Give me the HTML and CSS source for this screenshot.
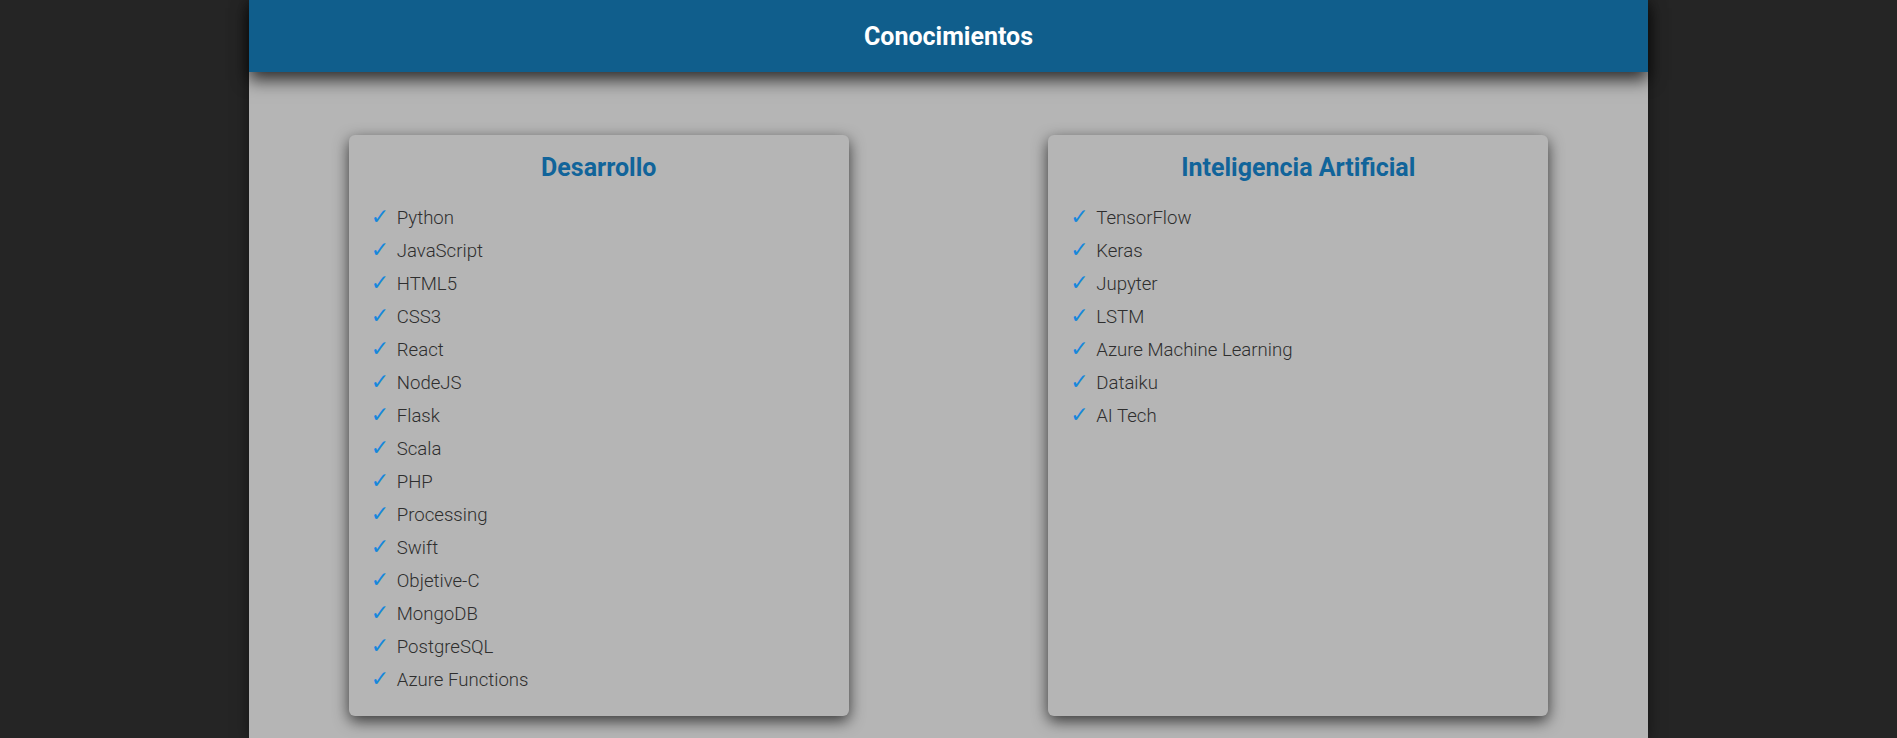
FILE: index.html
```html
<!DOCTYPE html>
<html lang="es">
<head>
<meta charset="utf-8">
<title>Conocimientos</title>
<link rel="stylesheet" href="styles.css">
</head>
<body>
<div class="page">
  <header class="topbar">
    <h1 class="topbar-title">Conocimientos</h1>
  </header>
  <main class="columns">
    <section class="col">
      <div class="card">
        <h2 class="card-title">Desarrollo</h2>
        <ul class="skills">
          <li>Python</li>
          <li>JavaScript</li>
          <li>HTML5</li>
          <li>CSS3</li>
          <li>React</li>
          <li>NodeJS</li>
          <li>Flask</li>
          <li>Scala</li>
          <li>PHP</li>
          <li>Processing</li>
          <li>Swift</li>
          <li>Objetive-C</li>
          <li>MongoDB</li>
          <li>PostgreSQL</li>
          <li>Azure Functions</li>
        </ul>
      </div>
    </section>
    <section class="col">
      <div class="card">
        <h2 class="card-title">Inteligencia Artificial</h2>
        <ul class="skills">
          <li>TensorFlow</li>
          <li>Keras</li>
          <li>Jupyter</li>
          <li>LSTM</li>
          <li>Azure Machine Learning</li>
          <li>Dataiku</li>
          <li>AI Tech</li>
        </ul>
      </div>
    </section>
  </main>
</div>
</body>
</html>
```
FILE: styles.css
```css
html, body {
  margin: 0;
  padding: 0;
  background: #252525;
  font-family: Roboto, "Liberation Sans", sans-serif;
}

.page {
  width: 1399px;
  margin: 0 auto;
  min-height: 100vh;
  background: #b5b5b5;
  box-shadow: 0 0 14px rgba(0, 0, 0, 0.5);
  position: relative;
}

.topbar {
  height: 72px;
  background: #105e8c;
  display: flex;
  align-items: center;
  justify-content: center;
  box-shadow: 0 8px 16px rgba(0, 0, 0, 0.75);
  position: relative;
  z-index: 1;
}

.topbar-title {
  margin: 0;
  color: #ffffff;
  font-size: 25px;
  font-weight: 700;
}

.columns {
  display: grid;
  grid-template-columns: 1fr 1fr;
  padding-top: 63px;
  padding-bottom: 22px;
}

.col {
  display: flex;
  justify-content: center;
}

.card {
  width: 500px;
  box-sizing: border-box;
  background: #b5b5b5;
  border-radius: 6px;
  box-shadow: 0 5px 15px rgba(0, 0, 0, 0.7);
  padding: 18px 22px 19px;
}

.card-title {
  margin: 0;
  text-align: center;
  color: #11649a;
  font-size: 25px;
  font-weight: 700;
  line-height: 30px;
}

.skills {
  list-style: none;
  margin: 19px 0 0;
  padding: 0;
}

.skills li {
  font-size: 18.6px;
  font-weight: 300;
  line-height: 33px;
  height: 33px;
  color: #2e2e2e;
}

.skills li::before {
  content: "\2713";
  display: inline-block;
  color: #1687dc;
  font-family: "DejaVu Sans", sans-serif;
  font-size: 22px;
  font-weight: 700;
  line-height: 20px;
  width: 26px;
}
```
